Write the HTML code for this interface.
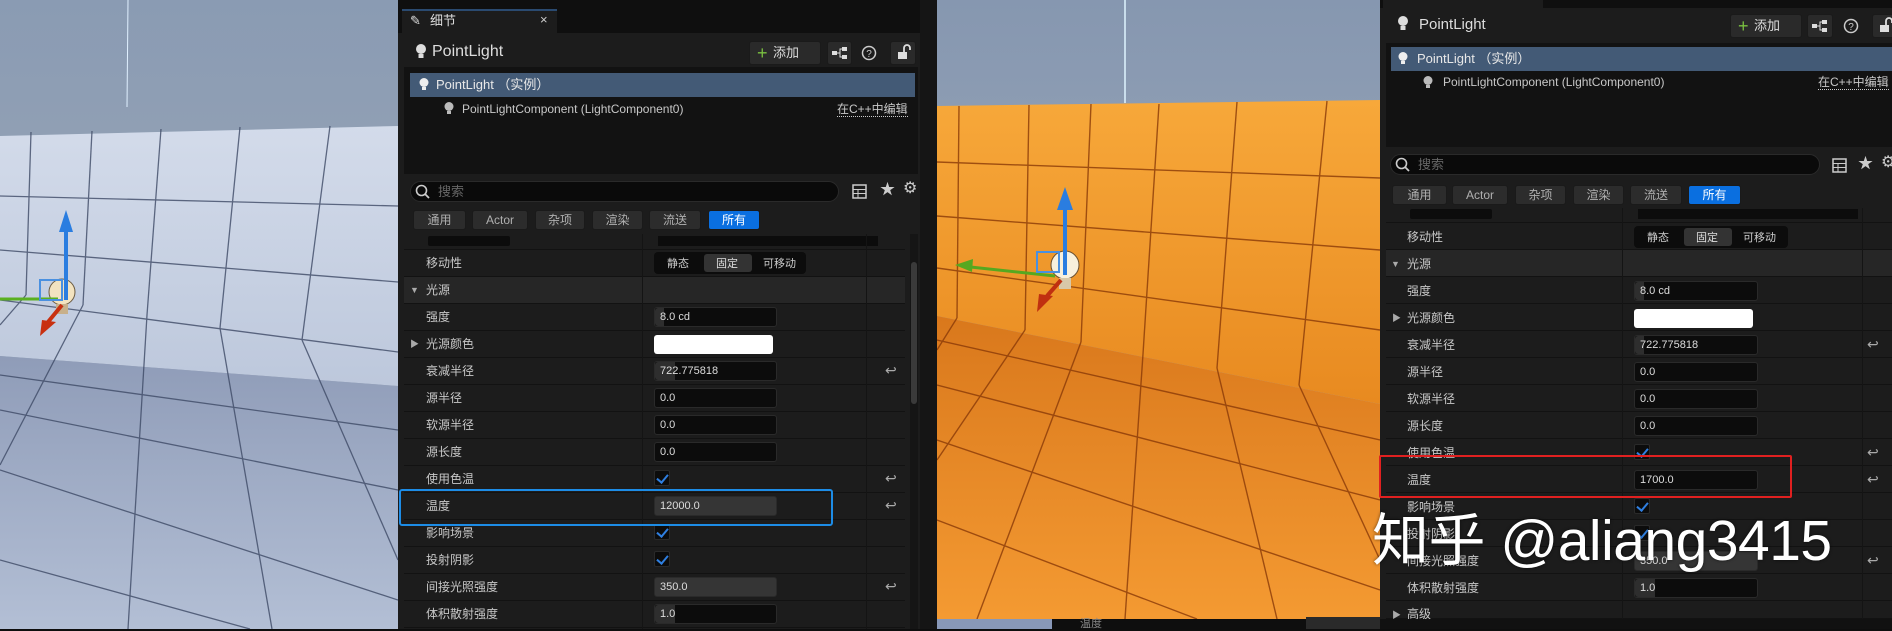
<!DOCTYPE html>
<html><head><meta charset="utf-8">
<style>
*{margin:0;padding:0;box-sizing:border-box}
body{width:1892px;height:629px;overflow:hidden;background:#0e0e0e;position:relative;font-family:"Liberation Sans","Noto Sans CJK SC",sans-serif;color:#c8c8c8}
.a{position:absolute}
.t{position:absolute;white-space:nowrap;font-size:12px;line-height:14px}
.row{position:absolute;height:27px;background:#1c1c1c;border-bottom:1px solid #121212}
.inp{position:absolute;height:20px;background:#0c0c0c;border:1px solid #2a2a2a;border-radius:3px;font-size:11px;color:#ddd;line-height:18px;padding-left:5px}
.inp i{position:absolute;left:0;top:0;bottom:0;width:9px;background:#2e2e2e;border-radius:3px 0 0 3px}
.inp span{position:relative}
.chk{position:absolute;width:16px;height:16px;background:#0c0c0c;border:1px solid #2a2a2a;border-radius:2px}
.chk::after{content:"";position:absolute;left:4px;top:1px;width:5px;height:9px;border:solid #2f7fe0;border-width:0 2px 2px 0;transform:rotate(40deg)}
.tab{position:absolute;height:20px;background:#2c2c2c;border:1px solid #1a1a1a;border-radius:3px;font-size:12px;line-height:18px;text-align:center;color:#b0b0b0}
.btn{position:absolute;background:#2a2a2a;border:1px solid #1a1a1a;border-radius:3px}
.rs{position:absolute;font-size:14px;color:#aaa}
</style></head><body>

<svg class="a" style="left:0;top:0" width="398" height="629" viewBox="0 0 398 629">
<defs>
<linearGradient id="sk" x1="0" y1="0" x2="0" y2="1"><stop offset="0" stop-color="#8a9bb3"/><stop offset="1" stop-color="#a6afb9"/></linearGradient>
<linearGradient id="wl" x1="0" y1="0" x2="0" y2="1"><stop offset="0" stop-color="#d3dbea"/><stop offset="1" stop-color="#bdc8dc"/></linearGradient>
<linearGradient id="fl" x1="0" y1="0" x2="0" y2="1"><stop offset="0" stop-color="#8f9cb8"/><stop offset="1" stop-color="#b3bfd5"/></linearGradient>
</defs>
<rect width="398" height="629" fill="url(#sk)"/>
<polygon points="0,136 398,126 398,386 0,356" fill="url(#wl)"/>
<polygon points="0,356 398,386 398,629 0,629" fill="url(#fl)"/>
<line x1="128" y1="0" x2="127" y2="107" stroke="#e0f0ff" stroke-width="1"/>
<g stroke="#3e4a66" stroke-width="1.3" fill="none" opacity=".8">
<line x1="31" y1="132" x2="26" y2="295"/><line x1="92" y1="131" x2="83" y2="305"/><line x1="161" y1="129" x2="147" y2="315"/><line x1="240" y1="127" x2="220" y2="328"/><line x1="330" y1="126" x2="302" y2="340"/>
<line x1="0" y1="196" x2="398" y2="206"/><line x1="0" y1="250" x2="398" y2="282"/><line x1="0" y1="300" x2="398" y2="352"/>
<line x1="26" y1="295" x2="0" y2="325"/><line x1="83" y1="305" x2="0" y2="465"/><line x1="147" y1="315" x2="128" y2="629"/><line x1="220" y1="328" x2="272" y2="629"/><line x1="302" y1="340" x2="398" y2="560"/>
<line x1="0" y1="375" x2="398" y2="430"/><line x1="0" y1="410" x2="398" y2="490"/><line x1="0" y1="470" x2="398" y2="600"/><line x1="0" y1="560" x2="250" y2="629"/>
</g>
<g>
<circle cx="62" cy="292" r="13" fill="#f3e3c0" stroke="#6a5a40"/>
<rect x="56" y="304" width="12" height="10" fill="#c8b08a"/>
<line x1="0" y1="299" x2="58" y2="299" stroke="#5ab020" stroke-width="3"/>
<line x1="66" y1="300" x2="66" y2="225" stroke="#2a7de0" stroke-width="4"/>
<polygon points="66,210 59,232 73,232" fill="#2a7de0"/>
<line x1="62" y1="305" x2="48" y2="322" stroke="#c83010" stroke-width="4"/>
<polygon points="40,336 42,320 56,322" fill="#c83010"/>
<rect x="40" y="280" width="22" height="20" fill="none" stroke="#4a90e0" stroke-width="2"/>
</g>
</svg>

<div class="a" style="left:398px;top:0;width:526px;height:629px;background:#1a1a1a"></div>
<div class="a" style="left:398px;top:0;width:526px;height:33px;background:#0f0f0f"></div>
<div class="a" style="left:402px;top:9px;width:155px;height:24px;background:#1c1c1c;border-top:2px solid #2a4a70"></div>
<div class="t" style="left:410px;top:14px;font-size:13px;color:#ddd">✎</div>
<div class="t" style="left:430px;top:14px;font-size:13px;color:#ddd">细节</div>
<div class="t" style="left:540px;top:13px;font-size:13px;color:#ccc">×</div>
<div class="a" style="left:398px;top:33px;width:522px;height:596px;background:#1c1c1c"></div>
<svg class="a" style="left:414px;top:43px" width="14" height="18"><circle cx="7" cy="6" r="5" fill="#ddd"/><rect x="4.5" y="11" width="5" height="4" fill="#ddd"/></svg>
<div class="t" style="left:432px;top:43px;font-size:16px;line-height:18px;color:#ddd">PointLight</div>
<div class="btn" style="left:749px;top:41px;width:72px;height:24px"></div>
<div class="t" style="left:757px;top:44px;font-size:18px;color:#7ac040;line-height:18px">+</div>
<div class="t" style="left:773px;top:46px;font-size:13px;color:#ddd">添加</div>
<div class="btn" style="left:827px;top:41px;width:25px;height:24px"></div>
<svg class="a" style="left:831px;top:46px" width="18" height="14"><rect x="1" y="5" width="5" height="4" fill="#ddd"/><rect x="11" y="1" width="5" height="4" fill="#ddd"/><rect x="11" y="9" width="5" height="4" fill="#ddd"/><path d="M6 7H9V3H11M9 7V11H11" stroke="#ddd" fill="none"/></svg>
<svg class="a" style="left:861px;top:45px" width="16" height="16"><circle cx="8" cy="8" r="6.5" stroke="#ccc" stroke-width="1.5" fill="none"/><text x="8" y="12" font-size="10" fill="#ccc" text-anchor="middle" font-family="Liberation Sans">?</text></svg>
<div class="btn" style="left:890px;top:41px;width:26px;height:24px"></div>
<svg class="a" style="left:896px;top:44px" width="16" height="17"><rect x="2" y="8" width="9" height="7" fill="#ddd"/><path d="M8 8V4a3 3 0 0 1 6 0v2" stroke="#ddd" stroke-width="1.8" fill="none"/></svg>
<div class="a" style="left:404px;top:67px;width:514px;height:107px;background:#121212"></div>
<div class="a" style="left:410px;top:73px;width:505px;height:24px;background:#435a76"></div>
<svg class="a" style="left:418px;top:77px" width="12" height="16"><circle cx="6" cy="5.5" r="4.5" fill="#eee"/><rect x="4" y="10" width="4" height="3" fill="#eee"/></svg>
<div class="t" style="left:436px;top:78px;color:#e8e8e8;font-size:13px">PointLight （实例）</div>
<svg class="a" style="left:443px;top:101px" width="12" height="16"><circle cx="6" cy="5.5" r="4.5" fill="#bbb"/><rect x="4" y="10" width="4" height="3" fill="#bbb"/></svg>
<div class="t" style="left:462px;top:102px;font-size:12px;color:#c8c8c8">PointLightComponent (LightComponent0)</div>
<div class="t" style="left:837px;top:102px;font-size:12px;color:#c8c8c8;border-bottom:1px dotted #ccc">在C++中编辑</div>
<div class="a" style="left:410px;top:181px;width:429px;height:21px;background:#0a0a0a;border:1px solid #2a2a2a;border-radius:11px"></div>
<svg class="a" style="left:415px;top:184px" width="16" height="16"><circle cx="6.5" cy="6.5" r="5" stroke="#ccc" stroke-width="1.6" fill="none"/><line x1="10" y1="10" x2="14" y2="14" stroke="#ccc" stroke-width="1.8"/></svg>
<div class="t" style="left:438px;top:185px;color:#666;font-size:13px">搜索</div>
<svg class="a" style="left:852px;top:184px" width="15" height="15"><rect x="1" y="1" width="13" height="13" fill="none" stroke="#ccc" stroke-width="1.5"/><line x1="1" y1="5.5" x2="14" y2="5.5" stroke="#ccc"/><line x1="1" y1="9.5" x2="14" y2="9.5" stroke="#ccc"/><line x1="6" y1="5.5" x2="6" y2="14" stroke="#ccc"/></svg>
<div class="t" style="left:880px;top:183px;font-size:15px;color:#ccc">★</div>
<div class="t" style="left:903px;top:182px;font-size:16px;color:#ccc">⚙</div>
<div class="tab" style="left:413px;top:210px;width:53px">通用</div>
<div class="tab" style="left:472px;top:210px;width:56px">Actor</div>
<div class="tab" style="left:535px;top:210px;width:50px">杂项</div>
<div class="tab" style="left:592px;top:210px;width:51px">渲染</div>
<div class="tab" style="left:649px;top:210px;width:52px">流送</div>
<div class="tab" style="left:708px;top:210px;width:52px;background:#0a6fe0;color:#fff">所有</div>
<div class="row" style="left:404px;top:234px;width:501px;height:16px"></div>
<div class="a" style="left:428px;top:236px;width:82px;height:10px;background:#0c0c0c;border-radius:2px"></div>
<div class="a" style="left:658px;top:236px;width:220px;height:10px;background:#0c0c0c"></div>
<div class="row" style="left:404px;top:250px;width:501px"></div>
<div class="row" style="left:404px;top:277px;width:501px;background:#262626"></div>
<div class="row" style="left:404px;top:304px;width:501px"></div><div class="row" style="left:404px;top:331px;width:501px"></div>
<div class="row" style="left:404px;top:358px;width:501px"></div><div class="row" style="left:404px;top:385px;width:501px"></div>
<div class="row" style="left:404px;top:412px;width:501px"></div><div class="row" style="left:404px;top:439px;width:501px"></div>
<div class="row" style="left:404px;top:466px;width:501px"></div><div class="row" style="left:404px;top:493px;width:501px"></div>
<div class="row" style="left:404px;top:520px;width:501px"></div><div class="row" style="left:404px;top:547px;width:501px"></div>
<div class="row" style="left:404px;top:574px;width:501px"></div><div class="row" style="left:404px;top:601px;width:501px"></div>
<div class="a" style="left:642px;top:234px;width:1px;height:395px;background:#141414"></div>
<div class="a" style="left:866px;top:234px;width:1px;height:395px;background:#141414"></div>
<div class="a" style="left:910px;top:234px;width:8px;height:395px;background:#151515"></div>
<div class="a" style="left:911px;top:262px;width:6px;height:142px;background:#3a3a3a;border-radius:3px"></div>
<div class="t" style="left:426px;top:256px">移动性</div>
<div class="a" style="left:654px;top:252px;width:152px;height:22px;background:#0c0c0c;border-radius:4px"></div>
<div class="a" style="left:704px;top:254px;width:48px;height:18px;background:#333;border-radius:3px"></div>
<div class="t" style="left:667px;top:257px;font-size:11px;color:#ccc">静态</div>
<div class="t" style="left:716px;top:257px;font-size:11px;color:#ddd">固定</div>
<div class="t" style="left:763px;top:257px;font-size:11px;color:#ccc">可移动</div>
<div class="t" style="left:410px;top:283px;font-size:9px;color:#aaa">▼</div>
<div class="t" style="left:426px;top:283px">光源</div>
<div class="t" style="left:426px;top:310px">强度</div><div class="inp" style="left:654px;top:307px;width:123px"><i></i><span>8.0 cd</span></div>
<div class="t" style="left:410px;top:337px;font-size:9px;color:#aaa">▶</div>
<div class="t" style="left:426px;top:337px">光源颜色</div><div class="a" style="left:654px;top:335px;width:119px;height:19px;background:#fff;border-radius:3px"></div>
<div class="t" style="left:426px;top:364px">衰减半径</div><div class="inp" style="left:654px;top:361px;width:123px"><i style="width:20px"></i><span>722.775818</span></div><div class="rs" style="left:885px;top:362px">↩</div>
<div class="t" style="left:426px;top:391px">源半径</div><div class="inp" style="left:654px;top:388px;width:123px"><span>0.0</span></div>
<div class="t" style="left:426px;top:418px">软源半径</div><div class="inp" style="left:654px;top:415px;width:123px"><span>0.0</span></div>
<div class="t" style="left:426px;top:445px">源长度</div><div class="inp" style="left:654px;top:442px;width:123px"><span>0.0</span></div>
<div class="t" style="left:426px;top:472px">使用色温</div><div class="chk" style="left:654px;top:470px"></div><div class="rs" style="left:885px;top:470px">↩</div>
<div class="t" style="left:426px;top:499px">温度</div><div class="inp" style="left:654px;top:496px;width:123px;background:#353535"><span>12000.0</span></div><div class="rs" style="left:885px;top:497px">↩</div>
<div class="t" style="left:426px;top:526px">影响场景</div><div class="chk" style="left:654px;top:524px"></div>
<div class="t" style="left:426px;top:553px">投射阴影</div><div class="chk" style="left:654px;top:551px"></div>
<div class="t" style="left:426px;top:580px">间接光照强度</div><div class="inp" style="left:654px;top:577px;width:123px;background:#353535"><span>350.0</span></div><div class="rs" style="left:885px;top:578px">↩</div>
<div class="t" style="left:426px;top:607px">体积散射强度</div><div class="inp" style="left:654px;top:604px;width:123px"><i style="width:20px"></i><span>1.0</span></div>
<div class="a" style="left:399px;top:489px;width:434px;height:37px;border:2px solid #1d8ce6;border-radius:3px"></div>
<div class="a" style="left:920px;top:0;width:17px;height:629px;background:#151515"></div>

<svg class="a" style="left:937px;top:0" width="443" height="619" viewBox="0 0 443 619">
<defs>
<linearGradient id="sk2" x1="0" y1="0" x2="0" y2="1"><stop offset="0" stop-color="#8697b0"/><stop offset="1" stop-color="#a8b3c0"/></linearGradient>
<linearGradient id="ow" x1="0" y1="0" x2="0" y2="1"><stop offset="0" stop-color="#f7a83a"/><stop offset="1" stop-color="#e88a20"/></linearGradient>
<linearGradient id="of" x1="0" y1="0" x2="0" y2="1"><stop offset="0" stop-color="#d9781c"/><stop offset="1" stop-color="#f49a32"/></linearGradient>
</defs>
<rect width="443" height="619" fill="url(#sk2)"/>
<polygon points="0,106 443,100 443,404 0,316" fill="url(#ow)"/>
<polygon points="0,316 443,404 443,619 0,619" fill="url(#of)"/>
<line x1="188" y1="0" x2="188" y2="103" stroke="#dff4ff" stroke-width="1.5"/>
<g stroke="#8a3a08" stroke-width="1.4" fill="none" opacity=".8">
<line x1="22" y1="106" x2="20" y2="318"/><line x1="92" y1="105" x2="88" y2="330"/><line x1="154" y1="104" x2="144" y2="342"/><line x1="222" y1="104" x2="206" y2="354"/><line x1="300" y1="102" x2="280" y2="368"/><line x1="390" y1="101" x2="362" y2="385"/>
<line x1="0" y1="162" x2="443" y2="178"/><line x1="0" y1="216" x2="443" y2="250"/><line x1="0" y1="268" x2="443" y2="330"/>
<line x1="20" y1="318" x2="0" y2="350"/><line x1="88" y1="330" x2="0" y2="460"/><line x1="144" y1="342" x2="40" y2="619"/><line x1="206" y1="354" x2="188" y2="619"/><line x1="280" y1="368" x2="340" y2="619"/><line x1="362" y1="385" x2="443" y2="560"/>
<line x1="0" y1="340" x2="443" y2="440"/><line x1="0" y1="385" x2="443" y2="500"/><line x1="0" y1="440" x2="443" y2="590"/><line x1="0" y1="520" x2="260" y2="619"/>
</g>
<circle cx="128" cy="265" r="14" fill="#f8f0dc" stroke="#6a5030"/>
<rect x="122" y="278" width="12" height="11" fill="#d8c8a8"/>
<line x1="24" y1="266" x2="118" y2="276" stroke="#56a820" stroke-width="3"/>
<polygon points="18,265 36,259 35,272" fill="#56a820"/>
<line x1="128" y1="275" x2="128" y2="205" stroke="#2a7de0" stroke-width="4"/>
<polygon points="128,187 120,210 136,210" fill="#2a7de0"/>
<line x1="124" y1="280" x2="110" y2="296" stroke="#c03010" stroke-width="4"/>
<polygon points="100,312 102,294 116,296" fill="#c03010"/>
<rect x="100" y="252" width="22" height="20" fill="none" stroke="#4a90e0" stroke-width="2"/>
</svg>
<div class="a" style="left:937px;top:619px;width:115px;height:10px;background:#8898b8"></div>
<div class="t" style="left:1080px;top:617px;font-size:11px;color:#888">温度</div>
<div class="a" style="left:1306px;top:617px;width:74px;height:12px;background:#2a2a2a"></div>

<div class="a" style="left:1380px;top:0;width:512px;height:629px;background:#1c1c1c"></div>
<div class="a" style="left:1380px;top:0;width:512px;height:8px;background:#0f0f0f"></div>
<div class="a" style="left:1383px;top:0;width:160px;height:8px;background:#1c1c1c"></div>
<svg class="a" style="left:1396px;top:15px" width="14" height="18"><circle cx="7" cy="6" r="5" fill="#ddd"/><rect x="4.5" y="11" width="5" height="4" fill="#ddd"/></svg>
<div class="t" style="left:1419px;top:16px;font-size:15px;line-height:17px;color:#ddd">PointLight</div>
<div class="btn" style="left:1730px;top:14px;width:72px;height:24px"></div>
<div class="t" style="left:1738px;top:17px;font-size:18px;color:#7ac040;line-height:18px">+</div>
<div class="t" style="left:1754px;top:19px;font-size:13px;color:#ddd">添加</div>
<div class="btn" style="left:1807px;top:14px;width:26px;height:24px"></div>
<svg class="a" style="left:1811px;top:19px" width="18" height="14"><rect x="1" y="5" width="5" height="4" fill="#ddd"/><rect x="11" y="1" width="5" height="4" fill="#ddd"/><rect x="11" y="9" width="5" height="4" fill="#ddd"/><path d="M6 7H9V3H11M9 7V11H11" stroke="#ddd" fill="none"/></svg>
<svg class="a" style="left:1843px;top:18px" width="16" height="16"><circle cx="8" cy="8" r="6.5" stroke="#ccc" stroke-width="1.5" fill="none"/><text x="8" y="12" font-size="10" fill="#ccc" text-anchor="middle" font-family="Liberation Sans">?</text></svg>
<div class="btn" style="left:1872px;top:14px;width:26px;height:24px"></div>
<svg class="a" style="left:1878px;top:17px" width="16" height="17"><rect x="2" y="8" width="9" height="7" fill="#ddd"/><path d="M8 8V4a3 3 0 0 1 6 0v2" stroke="#ddd" stroke-width="1.8" fill="none"/></svg>
<div class="a" style="left:1386px;top:43px;width:506px;height:104px;background:#121212"></div>
<div class="a" style="left:1391px;top:47px;width:501px;height:24px;background:#435a76"></div>
<svg class="a" style="left:1397px;top:51px" width="12" height="16"><circle cx="6" cy="5.5" r="4.5" fill="#eee"/><rect x="4" y="10" width="4" height="3" fill="#eee"/></svg>
<div class="t" style="left:1417px;top:52px;color:#e8e8e8;font-size:13px">PointLight （实例）</div>
<svg class="a" style="left:1422px;top:75px" width="12" height="16"><circle cx="6" cy="5.5" r="4.5" fill="#bbb"/><rect x="4" y="10" width="4" height="3" fill="#bbb"/></svg>
<div class="t" style="left:1443px;top:75px;font-size:12px;color:#c8c8c8">PointLightComponent (LightComponent0)</div>
<div class="t" style="left:1818px;top:75px;font-size:12px;color:#c8c8c8;border-bottom:1px dotted #ccc">在C++中编辑</div>
<div class="a" style="left:1390px;top:154px;width:430px;height:21px;background:#0a0a0a;border:1px solid #2a2a2a;border-radius:11px"></div>
<svg class="a" style="left:1395px;top:157px" width="16" height="16"><circle cx="6.5" cy="6.5" r="5" stroke="#ccc" stroke-width="1.6" fill="none"/><line x1="10" y1="10" x2="14" y2="14" stroke="#ccc" stroke-width="1.8"/></svg>
<div class="t" style="left:1418px;top:158px;color:#666;font-size:13px">搜索</div>
<svg class="a" style="left:1832px;top:158px" width="15" height="15"><rect x="1" y="1" width="13" height="13" fill="none" stroke="#ccc" stroke-width="1.5"/><line x1="1" y1="5.5" x2="14" y2="5.5" stroke="#ccc"/><line x1="1" y1="9.5" x2="14" y2="9.5" stroke="#ccc"/><line x1="6" y1="5.5" x2="6" y2="14" stroke="#ccc"/></svg>
<div class="t" style="left:1858px;top:157px;font-size:15px;color:#ccc">★</div>
<div class="t" style="left:1881px;top:156px;font-size:16px;color:#ccc">⚙</div>
<div class="tab" style="left:1392px;top:185px;width:55px">通用</div>
<div class="tab" style="left:1452px;top:185px;width:56px">Actor</div>
<div class="tab" style="left:1515px;top:185px;width:51px">杂项</div>
<div class="tab" style="left:1573px;top:185px;width:51px">渲染</div>
<div class="tab" style="left:1630px;top:185px;width:52px">流送</div>
<div class="tab" style="left:1688px;top:185px;width:53px;background:#0a6fe0;color:#fff">所有</div>
<div class="row" style="left:1386px;top:208px;width:506px;height:15px"></div>
<div class="a" style="left:1410px;top:209px;width:82px;height:10px;background:#0c0c0c;border-radius:2px"></div>
<div class="a" style="left:1638px;top:209px;width:220px;height:10px;background:#0c0c0c"></div>
<div class="row" style="left:1386px;top:223px;width:506px"></div>
<div class="row" style="left:1386px;top:250px;width:506px;background:#262626"></div>
<div class="row" style="left:1386px;top:277px;width:506px"></div><div class="row" style="left:1386px;top:304px;width:506px"></div>
<div class="row" style="left:1386px;top:331px;width:506px"></div><div class="row" style="left:1386px;top:358px;width:506px"></div>
<div class="row" style="left:1386px;top:385px;width:506px"></div><div class="row" style="left:1386px;top:412px;width:506px"></div>
<div class="row" style="left:1386px;top:439px;width:506px"></div><div class="row" style="left:1386px;top:466px;width:506px"></div>
<div class="row" style="left:1386px;top:493px;width:506px"></div><div class="row" style="left:1386px;top:520px;width:506px"></div>
<div class="row" style="left:1386px;top:547px;width:506px"></div><div class="row" style="left:1386px;top:574px;width:506px"></div>
<div class="row" style="left:1386px;top:601px;width:506px;height:18px"></div>
<div class="a" style="left:1622px;top:208px;width:1px;height:411px;background:#141414"></div>
<div class="a" style="left:1862px;top:208px;width:1px;height:411px;background:#141414"></div>
<div class="t" style="left:1407px;top:230px">移动性</div>
<div class="a" style="left:1634px;top:226px;width:154px;height:22px;background:#0c0c0c;border-radius:4px"></div>
<div class="a" style="left:1684px;top:228px;width:48px;height:18px;background:#333;border-radius:3px"></div>
<div class="t" style="left:1647px;top:231px;font-size:11px;color:#ccc">静态</div>
<div class="t" style="left:1696px;top:231px;font-size:11px;color:#ddd">固定</div>
<div class="t" style="left:1743px;top:231px;font-size:11px;color:#ccc">可移动</div>
<div class="t" style="left:1391px;top:257px;font-size:9px;color:#aaa">▼</div>
<div class="t" style="left:1407px;top:257px">光源</div>
<div class="t" style="left:1407px;top:284px">强度</div><div class="inp" style="left:1634px;top:281px;width:124px"><i></i><span>8.0 cd</span></div>
<div class="t" style="left:1392px;top:311px;font-size:9px;color:#aaa">▶</div>
<div class="t" style="left:1407px;top:311px">光源颜色</div><div class="a" style="left:1634px;top:309px;width:119px;height:19px;background:#fff;border-radius:3px"></div>
<div class="t" style="left:1407px;top:338px">衰减半径</div><div class="inp" style="left:1634px;top:335px;width:124px"><i></i><span>722.775818</span></div><div class="rs" style="left:1867px;top:336px">↩</div>
<div class="t" style="left:1407px;top:365px">源半径</div><div class="inp" style="left:1634px;top:362px;width:124px"><span>0.0</span></div>
<div class="t" style="left:1407px;top:392px">软源半径</div><div class="inp" style="left:1634px;top:389px;width:124px"><span>0.0</span></div>
<div class="t" style="left:1407px;top:419px">源长度</div><div class="inp" style="left:1634px;top:416px;width:124px"><span>0.0</span></div>
<div class="t" style="left:1407px;top:446px">使用色温</div><div class="chk" style="left:1634px;top:444px"></div><div class="rs" style="left:1867px;top:444px">↩</div>
<div class="t" style="left:1407px;top:473px">温度</div><div class="inp" style="left:1634px;top:470px;width:124px"><span>1700.0</span></div><div class="rs" style="left:1867px;top:471px">↩</div>
<div class="t" style="left:1407px;top:500px">影响场景</div><div class="chk" style="left:1634px;top:498px"></div>
<div class="t" style="left:1407px;top:527px">投射阴影</div><div class="chk" style="left:1634px;top:525px"></div>
<div class="t" style="left:1407px;top:554px">间接光照强度</div><div class="inp" style="left:1634px;top:551px;width:124px;background:#353535"><span>350.0</span></div><div class="rs" style="left:1867px;top:552px">↩</div>
<div class="t" style="left:1407px;top:581px">体积散射强度</div><div class="inp" style="left:1634px;top:578px;width:124px"><i style="width:20px"></i><span>1.0</span></div>
<div class="t" style="left:1392px;top:608px;font-size:9px;color:#aaa">▶</div>
<div class="t" style="left:1407px;top:607px">高级</div>
<div class="a" style="left:1380px;top:619px;width:512px;height:10px;background:#111"></div>
<div class="a" style="left:1379px;top:455px;width:413px;height:43px;border:2px solid #e02020;border-radius:2px"></div>
<div class="t" style="left:1372px;top:510px;font-size:57px;line-height:62px;color:#fff;text-shadow:0 0 3px rgba(0,0,0,.6);letter-spacing:-0.5px">知乎 @aliang3415</div>
</body></html>
